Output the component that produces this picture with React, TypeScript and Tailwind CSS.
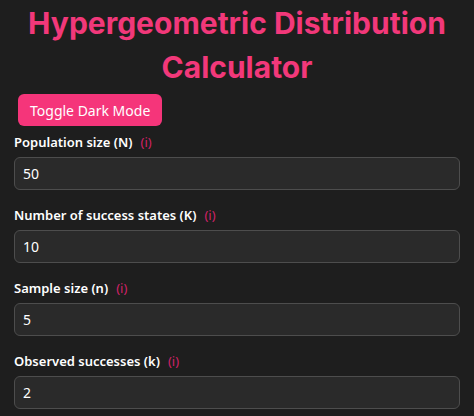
import React from "react";

const fields = [
  { label: "Population size (N)", value: "50" },
  { label: "Number of success states (K)", value: "10" },
  { label: "Sample size (n)", value: "5" },
  { label: "Observed successes (k)", value: "2" },
];

export default function App() {
  return (
    <div
      className="min-h-screen bg-[#1e1e1e] text-white px-[14px] pt-[1px]"
      style={{ fontFamily: '"Noto Sans", "Open Sans", sans-serif' }}
    >
      <h1
        className="text-center text-[#f2387a] text-[30px] leading-[44px] font-bold"
        style={{ fontFamily: "Inter, sans-serif" }}
      >
        Hypergeometric Distribution Calculator
      </h1>

      <button className="mt-[5px] ml-[4px] h-[32px] px-[12px] rounded-[6px] bg-[#f5357a] text-white text-[14px]">
        Toggle Dark Mode
      </button>

      <div className="mt-[6px] flex flex-col">
        {fields.map((f) => (
          <div key={f.label} className="flex flex-col mb-[15px]">
            <label className="text-[13px] font-semibold leading-[20px] mb-[5px]">
              {f.label}
              <span className="ml-[8px] font-normal text-[#d02268]">(i)</span>
            </label>
            <input
              readOnly
              value={f.value}
              className="h-[33px] w-full rounded-[6px] border border-[#4d4d4d] bg-[#2a2a2a] px-[8px] text-[14px] text-white outline-none"
            />
          </div>
        ))}
      </div>
    </div>
  );
}
